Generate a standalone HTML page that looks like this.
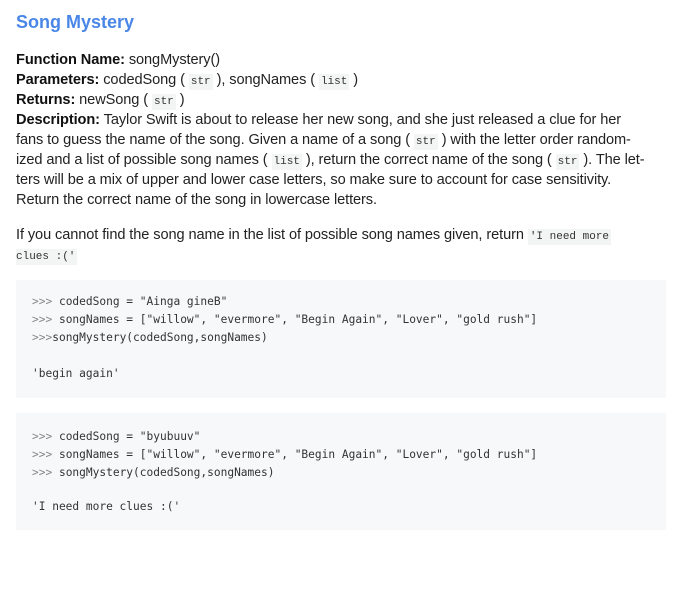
<!DOCTYPE html>
<html><head><style>
body{margin:0;background:#fff;width:685px;height:594px;overflow:hidden;font-family:"Liberation Sans",Arial,sans-serif;color:#222;}
.t{position:absolute;left:16px;top:12px;font-size:18px;font-weight:bold;color:#4a86e8;}
.l{position:absolute;left:16px;font-size:14.6px;white-space:nowrap;letter-spacing:-0.1px;line-height:20px;}
b{color:#111}
code{font-family:"Liberation Mono",monospace;font-size:11px;background:#f3f4f4;padding:2px 2px;letter-spacing:0;color:#333}
.c{position:absolute;left:16px;width:650px;background:#f6f8fa;}
.c div{position:absolute;left:16px;font-family:"DejaVu Sans Mono","Liberation Mono",monospace;font-size:11.2px;color:#333;white-space:pre;}
.p{color:#888}
</style></head><body>
<div class="t">Song Mystery</div>
<div class="l" style="top:50px"><b>Function Name:</b> songMystery()</div>
<div class="l" style="top:70px"><b>Parameters:</b> codedSong ( <code>str</code> ), songNames ( <code>list</code> )</div>
<div class="l" style="top:90px"><b>Returns:</b> newSong ( <code>str</code> )</div>
<div class="l" style="top:110px"><b>Description:</b> Taylor Swift is about to release her new song, and she just released a clue for her</div>
<div class="l" style="top:130px">fans to guess the name of the song. Given a name of a song ( <code>str</code> ) with the letter order random-</div>
<div class="l" style="top:150px">ized and a list of possible song names ( <code>list</code> ), return the correct name of the song ( <code>str</code> ). The let-</div>
<div class="l" style="top:170px">ters will be a mix of upper and lower case letters, so make sure to account for case sensitivity.</div>
<div class="l" style="top:190px">Return the correct name of the song in lowercase letters.</div>
<div class="l" style="top:225px">If you cannot find the song name in the list of possible song names given, return <code>'I need more</code></div>
<div class="l" style="top:245px"><code style="padding-left:0">clues :('</code></div>
<div class="c" style="top:280px;height:118px">
<div style="top:15px"><span class="p">&gt;&gt;&gt;</span> codedSong = "Ainga gineB"</div>
<div style="top:33px"><span class="p">&gt;&gt;&gt;</span> songNames = ["willow", "evermore", "Begin Again", "Lover", "gold rush"]</div>
<div style="top:51px"><span class="p">&gt;&gt;&gt;</span>songMystery(codedSong,songNames)</div>
<div style="top:87px">'begin again'</div>
</div>
<div class="c" style="top:413px;height:117px">
<div style="top:17px"><span class="p">&gt;&gt;&gt;</span> codedSong = "byubuuv"</div>
<div style="top:35px"><span class="p">&gt;&gt;&gt;</span> songNames = ["willow", "evermore", "Begin Again", "Lover", "gold rush"]</div>
<div style="top:53px"><span class="p">&gt;&gt;&gt;</span> songMystery(codedSong,songNames)</div>
<div style="top:87px">'I need more clues :('</div>
</div>
</body></html>
